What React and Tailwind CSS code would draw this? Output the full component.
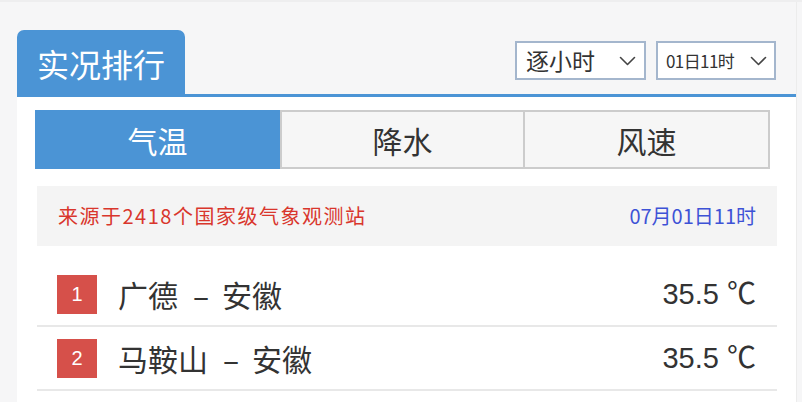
import React, { useState } from 'react';

const cjk = { fontFamily: '"Noto Sans CJK SC", "Noto Sans", sans-serif' };
const num = { fontFamily: '"Liberation Sans", "Noto Sans CJK SC", sans-serif' };

const rankings = [
  { rank: 1, city: '广德', province: '安徽', value: '35.5' },
  { rank: 2, city: '马鞍山', province: '安徽', value: '35.5' },
];

function Chevron() {
  return (
    <svg width="17" height="10" viewBox="0 0 17 10" fill="none" stroke="#444" strokeWidth="1.6" strokeLinecap="round" strokeLinejoin="round">
      <path d="M1.5 1.5 L8.5 8.5 L15.5 1.5" />
    </svg>
  );
}

export default function App() {
  const [tab, setTab] = useState(0);
  const tabs = ['气温', '降水', '风速'];

  return (
    <div className="w-[802px] h-[402px] overflow-hidden bg-[#f6f6f7] border-t-2 border-[#eeeeef]" style={cjk}>
      <div className="ml-[17px] w-[780px] h-full flex flex-col border-r border-[#ececec]">
        {/* header */}
        <div className="flex items-start justify-between pt-[28px]">
          <div className="w-[168px] h-[64px] bg-[#4b94d5] rounded-t-[7px] flex items-center pl-[20px] pt-[2px] text-white text-[32px] leading-none">
            实况排行
          </div>
          <div className="flex gap-[10px] mt-[11px] mr-[20px]">
            <div className="w-[131px] h-[39px] bg-white border-2 border-[#a4b6cd] flex items-center justify-between pl-[9px] pr-[8px]">
              <span className="text-[23px] text-[#333] leading-none">逐小时</span>
              <Chevron />
            </div>
            <div className="w-[120px] h-[39px] bg-white border-2 border-[#a4b6cd] flex items-center justify-between pl-[8px] pr-[7px]">
              <span className="text-[17px] text-[#333] leading-none tracking-[-0.6px]">01日11时</span>
              <Chevron />
            </div>
          </div>
        </div>
        <div className="h-[3px] bg-[#4b94d5]" />

        {/* panel */}
        <div className="flex-1 bg-white px-[18px] pt-[13px]">
          <div className="flex w-[735px] h-[59px]">
            {tabs.map((t, i) => (
              <button
                key={t}
                onClick={() => setTab(i)}
                className={`w-[245px] shrink-0 flex items-center justify-center text-[30px] leading-none ${
                  tab === i ? 'bg-[#4b94d5] text-white' : 'bg-[#f6f6f6] text-[#333] border-2 border-[#cccccc]'
                } ${i === 2 ? 'border-l-0' : ''}`}
              >
                {t}
              </button>
            ))}
          </div>

          <div className="mt-[17px] ml-[2px] w-[740px] h-[60px] bg-[#f4f4f4] flex items-center justify-between pl-[21px] pr-[21px]">
            <span className="text-[20px] text-[#d9362c] leading-none tracking-[1.5px]">来源于2418个国家级气象观测站</span>
            <span className="text-[20px] text-[#3d52d6] leading-none">07月01日11时</span>
          </div>

          <div className="mt-[17px] ml-[2px] w-[740px]">
            {rankings.map((r) => (
              <div key={r.rank} className="h-[64px] flex items-center border-b-2 border-[#e8e8e8] pl-[20px] pr-[21px]">
                <div className="w-[40px] h-[39px] bg-[#d6504a] text-white text-[20px] flex items-center justify-center" style={num}>
                  {r.rank}
                </div>
                <div className="ml-[21px] flex items-center text-[30px] text-[#333] leading-none">
                  <span>{r.city}</span>
                  <span className="ml-[15px] mr-[13px]">–</span>
                  <span>{r.province}</span>
                </div>
                <div className="ml-auto text-[29px] text-[#333] leading-none" style={num}>
                  {r.value} ℃
                </div>
              </div>
            ))}
          </div>
        </div>
      </div>
    </div>
  );
}
